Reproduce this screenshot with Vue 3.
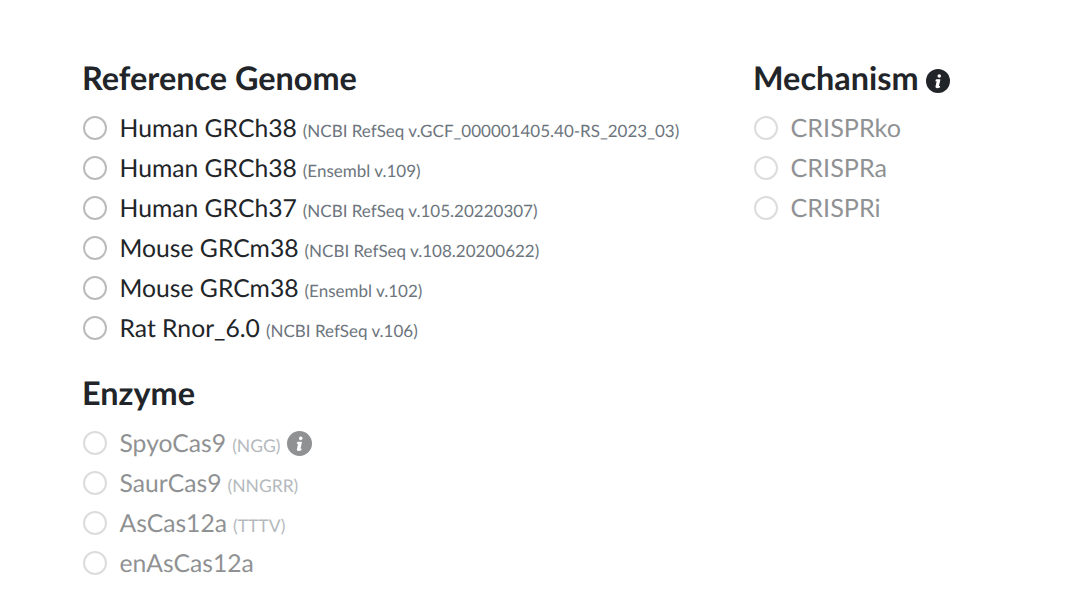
<script setup>
const genomes = [
  { name: "Human GRCh38", note: "(NCBI RefSeq v.GCF_000001405.40-RS_2023_03)" },
  { name: "Human GRCh38", note: "(Ensembl v.109)" },
  { name: "Human GRCh37", note: "(NCBI RefSeq v.105.20220307)" },
  { name: "Mouse GRCm38", note: "(NCBI RefSeq v.108.20200622)" },
  { name: "Mouse GRCm38", note: "(Ensembl v.102)" },
  { name: "Rat Rnor_6.0", note: "(NCBI RefSeq v.106)" },
];

const enzymes = [
  { name: "SpyoCas9", note: "(NGG)", info: true },
  { name: "SaurCas9", note: "(NNGRR)" },
  { name: "AsCas12a", note: "(TTTV)" },
  { name: "enAsCas12a" },
];

const mechanisms = ["CRISPRko", "CRISPRa", "CRISPRi"];
</script>

<template>
  <div class="page">
    <div class="col-left">
      <h2 class="title">Reference Genome</h2>
      <div class="options">
        <label v-for="g in genomes" :key="g.name + g.note" class="option">
          <span class="radio"></span>
          <span class="name">{{ g.name }}</span>
          <small class="note">{{ g.note }}</small>
        </label>
      </div>

      <h2 class="title enzyme-title">Enzyme</h2>
      <div class="options disabled enzymes">
        <label v-for="e in enzymes" :key="e.name" class="option">
          <span class="radio"></span>
          <span class="name">{{ e.name }}</span>
          <small v-if="e.note" class="note">{{ e.note }}</small>
          <svg v-if="e.info" class="info info-lg" viewBox="0 0 512 512" aria-hidden="true">
            <circle cx="256" cy="256" r="256" />
            <path class="info-i" d="M283 112a38 38 0 1 1-1 76 38 38 0 0 1 1-76zM206 232c2-9 8-14 17-14h70c10 0 15 7 13 17l-29 122c-1 6 3 9 9 8l15-5-5 34c-20 9-41 14-60 14-26 0-38-15-33-39l22-99c1-6-2-9-8-9l-17 3z" />
          </svg>
        </label>
      </div>
    </div>

    <div class="col-right">
      <h2 class="title">
        Mechanism
        <svg class="info info-title" viewBox="0 0 512 512" aria-hidden="true">
          <circle cx="256" cy="256" r="256" />
          <path class="info-i" d="M283 112a38 38 0 1 1-1 76 38 38 0 0 1 1-76zM206 232c2-9 8-14 17-14h70c10 0 15 7 13 17l-29 122c-1 6 3 9 9 8l15-5-5 34c-20 9-41 14-60 14-26 0-38-15-33-39l22-99c1-6-2-9-8-9l-17 3z" />
        </svg>
      </h2>
      <div class="options disabled">
        <label v-for="m in mechanisms" :key="m" class="option">
          <span class="radio"></span>
          <span class="name">{{ m }}</span>
        </label>
      </div>
    </div>
  </div>
</template>

<style scoped>
.page {
  display: flex;
  height: 602px;
  box-sizing: border-box;
  padding: 59px 0 0 83px;
  background: #fff;
  color: #212529;
  font-family: Lato, "Liberation Sans", sans-serif;
  text-rendering: geometricPrecision;
}

.col-left {
  width: 671px;
}

.title {
  display: flex;
  align-items: center;
  gap: 7px;
  margin: 0 0 11px -1px;
  height: 38px;
  font-size: 32.4px;
  font-weight: 700;
  line-height: 38px;
}

.enzyme-title {
  margin-top: 26px;
}

.option {
  display: flex;
  align-items: baseline;
  height: 40px;
  line-height: 40px;
}

.col-left .option {
  line-height: 42px;
}

.radio {
  flex: none;
  align-self: center;
  width: 20px;
  height: 20px;
  margin-right: 12.5px;
  border: 2px solid #bbb;
  border-radius: 50%;
  background: #fff;
}

.name {
  font-size: 24.7px;
}

.col-right .name {
  font-size: 25.2px;
}

.note {
  margin-left: 6px;
  font-size: 17px;
  color: #6c757d;
}

.enzymes .note {
  font-size: 17.5px;
}

.info {
  flex: none;
  width: 24px;
  height: 24px;
  fill: #212529;
}

.info-title {
  margin-top: 5px;
}

.info-lg {
  align-self: center;
  width: 25px;
  height: 25px;
  margin-left: 7px;
}

.info-i {
  fill: #fff;
}

.disabled {
  opacity: 0.5;
}
</style>
